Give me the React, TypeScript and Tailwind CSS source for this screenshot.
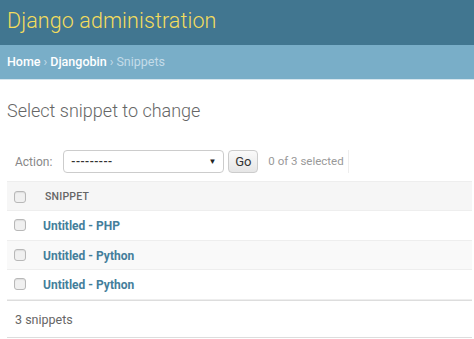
import React from "react";

function Check() {
  return (
    <span className="inline-block w-[12px] h-[12px] rounded-[3px] border border-[#b8b8b8] bg-[#f0f0f0] shadow-[inset_0_1px_1px_rgba(0,0,0,0.08)]" />
  );
}

export default function App() {
  const rows = ["Untitled - PHP", "Untitled - Python", "Untitled - Python"];
  return (
    <div className="w-[474px] h-[339px] overflow-hidden bg-white font-['Roboto','Liberation_Sans',sans-serif]">
      <div className="h-[45px] bg-[#417690] flex items-center px-[7px] pb-[4px]">
        <h1 className="text-[21.5px] font-light text-[#f5dd5d] leading-none tracking-[0.1px]">Django administration</h1>
      </div>
      <div className="h-[35px] bg-[#79aec8] flex items-center px-[7px] text-[12.5px] text-white border-b border-[#d7e6ee]">
        <span className="font-medium">Home</span>
        <span className="text-[#c4dce8] mx-[3px]">›</span>
        <span className="font-medium">Djangobin</span>
        <span className="text-[#c4dce8] mx-[3px]">›</span>
        <span className="text-[#c4dce8]">Snippets</span>
      </div>
      <div className="pl-[7px] pr-[2px]">
        <h2 className="mt-[22px] text-[18px] font-light text-[#666] leading-none">Select snippet to change</h2>
        <div className="mt-[30px] flex items-center h-[23px] pl-[8px]">
          <span className="text-[12px] text-[#888] mr-[11px]">Action:</span>
          <div className="w-[161px] h-[23px] border border-[#ccc] rounded-[4px] flex items-center justify-between px-[7px] bg-white">
            <span className="text-[12px] text-[#333] font-medium tracking-[0.5px]">---------</span>
            <span className="text-[8px] text-[#222]">▼</span>
          </div>
          <div className="ml-[4px] w-[30px] h-[23px] border border-[#ccc] rounded-[4px] bg-gradient-to-b from-[#fafafa] to-[#e6e6e6] flex items-center justify-center text-[13px] text-[#333]">Go</div>
          <span className="ml-[10px] text-[11.5px] text-[#999] pr-[4px] border-r border-[#eee] h-[23px] flex items-center">0 of 3 selected</span>
        </div>
        <div className="mt-[8px] border-t border-[#eee]">
          <div className="h-[29px] bg-[#f6f6f6] border-b border-[#eee] flex items-center">
            <span className="w-[38px] flex pl-[7px] pt-[1px]"><Check /></span>
            <span className="text-[10.5px] font-medium text-[#666] tracking-[0.2px] mt-[2px]">SNIPPET</span>
          </div>
          {rows.map((r, i) => (
            <div key={i} className={`h-[29.5px] flex items-center border-b border-[#eee] ${i === 1 ? "bg-[#f9f9f9]" : "bg-white"}`}>
              <span className="w-[36px] flex pl-[7px]"><Check /></span>
              <span className="text-[12px] font-bold text-[#447e9b] mt-[2px]">{r}</span>
            </div>
          ))}
          <div className="h-[1px] bg-[#ddd]" />
          <div className="h-[37px] border-b border-[#ddd] flex items-center pl-[8px] pt-[3px] text-[12.5px] text-[#666]">3 snippets</div>
        </div>
      </div>
    </div>
  );
}
